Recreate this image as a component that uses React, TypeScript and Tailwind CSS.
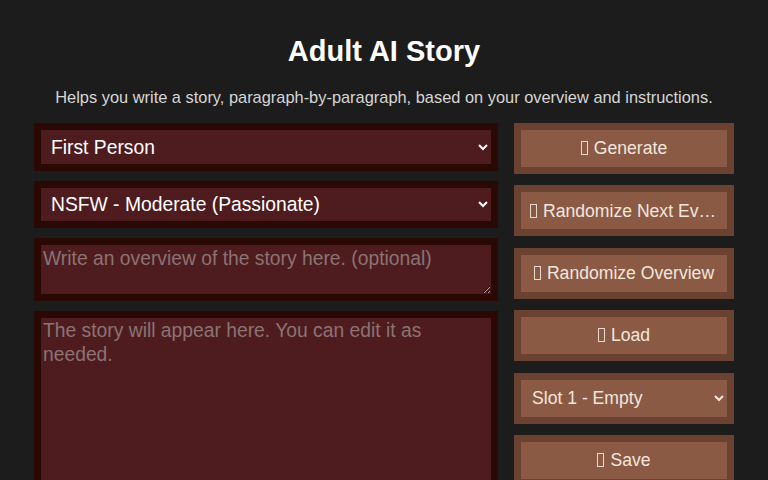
import React from "react";

function Tofu() {
  return <span className="inline-block w-[7px] h-[14px] border border-current mr-[6px] align-[-1px] opacity-90" />;
}

function LeftCard({ children }: { children: React.ReactNode }) {
  return <div className="bg-[#2a0904] p-[7px]">{children}</div>;
}

function RightCard({ children }: { children: React.ReactNode }) {
  return <div className="bg-[#6b4232] p-[7px]">{children}</div>;
}

function Btn({ label }: { label: string }) {
  return (
    <button className="w-full h-[37px] bg-[#8a5a45] text-[#f3e6dc] text-[17.6px] px-[9px] whitespace-nowrap overflow-hidden text-ellipsis block text-center">
      <Tofu />
      {label}
    </button>
  );
}

export default function App() {
  return (
    <div className="min-h-[480px] bg-[#1c1c1c] text-white" style={{ fontFamily: '"Liberation Sans", Arial, sans-serif' }}>
      <div className="w-[700px] mx-auto pt-[34px]">
        <h1 className="text-center font-bold text-[29px] leading-[34px]">Adult AI Story</h1>
        <p className="text-center text-[16.4px] leading-[18px] mt-[20px] text-[#d6d6d6]">
          Helps you write a story, paragraph-by-paragraph, based on your overview and instructions.
        </p>
        <div className="mt-[17px] flex gap-[16px] items-start">
          <div className="w-[464px] flex flex-col gap-[10px]">
            <LeftCard>
              <select className="w-full h-[34px] bg-[#4e1c1f] text-white text-[19.3px] pl-[6px] pr-[4px] outline-none border-0">
                <option>First Person</option>
              </select>
            </LeftCard>
            <LeftCard>
              <select className="w-full h-[33px] bg-[#4e1c1f] text-white text-[19.3px] pl-[6px] pr-[4px] outline-none border-0">
                <option>NSFW - Moderate (Passionate)</option>
              </select>
            </LeftCard>
            <LeftCard>
              <textarea
                className="w-full h-[49px] block bg-[#4e1c1f] text-white text-[19.3px] leading-[23px] px-[2px] py-[2px] outline-none placeholder:text-[#8c7373]"
                placeholder="Write an overview of the story here. (optional)"
              />
            </LeftCard>
            <LeftCard>
              <textarea
                className="w-full h-[300px] block bg-[#4e1c1f] text-white text-[19.3px] leading-[24px] px-[2px] py-[1px] outline-none resize-none placeholder:text-[#8c7373]"
                placeholder="The story will appear here. You can edit it as needed."
              />
            </LeftCard>
          </div>
          <div className="w-[220px] flex flex-col gap-[11.4px]">
            <RightCard><Btn label="Generate" /></RightCard>
            <RightCard><Btn label="Randomize Next Event" /></RightCard>
            <RightCard><Btn label="Randomize Overview" /></RightCard>
            <RightCard><Btn label="Load" /></RightCard>
            <RightCard>
              <select className="w-full h-[37px] bg-[#8a5a45] text-[#f3e6dc] text-[17.6px] pl-[7px] pr-[4px] outline-none border-0">
                <option>Slot 1 - Empty</option>
              </select>
            </RightCard>
            <RightCard><Btn label="Save" /></RightCard>
          </div>
        </div>
      </div>
    </div>
  );
}
